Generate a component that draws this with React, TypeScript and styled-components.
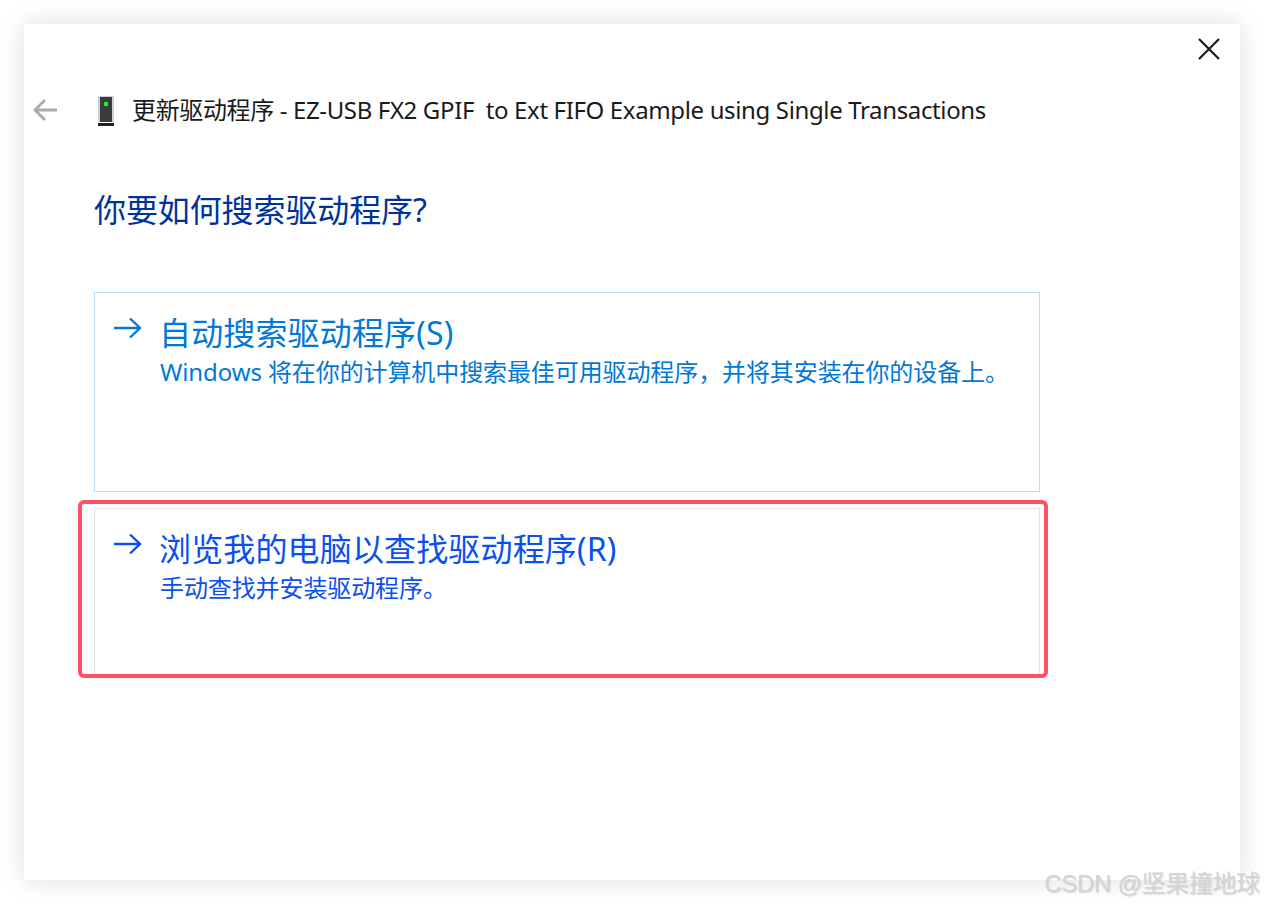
import styled, { createGlobalStyle } from "styled-components";

const GlobalStyle = createGlobalStyle`
    html, body {
        margin: 0;
        padding: 0;
        background: #fff;
    }
    body {
        font-family: "Noto Sans", "Noto Sans CJK SC", sans-serif;
    }
`;

const Page = styled.div`
    position: relative;
    box-sizing: border-box;
    width: 1264px;
    height: 906px;
    padding: 24px;
    overflow: hidden;
    background: #fff;
`;

const Dialog = styled.div`
    position: relative;
    box-sizing: border-box;
    width: 1216px;
    height: 856px;
    background: #fff;
    box-shadow: 0 0 24px rgba(0, 0, 0, 0.13);
`;

const TitleBar = styled.div`
    display: flex;
    justify-content: flex-end;
    height: 50px;
    padding: 12px 16px 0 0;
    box-sizing: border-box;
`;

const CloseButton = styled.button`
    width: 30px;
    height: 26px;
    padding: 0;
    border: 0;
    background: none;
    display: flex;
    align-items: center;
    justify-content: center;
`;

const NavRow = styled.div`
    display: flex;
    align-items: center;
    height: 40px;
    margin-top: 16px;
    padding-left: 8px;
`;

const BackButton = styled.div`
    display: flex;
    width: 26px;
    margin-right: 40px;
`;

const DeviceIcon = styled.div`
    display: flex;
    margin: 2px 18px 0 0;
`;

const NavTitle = styled.span`
    margin-bottom: 4px;
    font-size: 24px;
    letter-spacing: -0.36px;
    color: #1a1a1a;
    white-space: pre;
`;

const Content = styled.div`
    padding: 0 200px 0 70px;
`;

const Heading = styled.h1`
    margin: 56px 0 0;
    height: 48px;
    font-size: 32px;
    line-height: 48px;
    font-weight: 400;
    color: #003399;
    letter-spacing: -0.1px;
`;

const Options = styled.div`
    display: flex;
    flex-direction: column;
    gap: 16px;
    margin-top: 58px;
`;

const Option = styled.div<{ $tall?: boolean; $active?: boolean }>`
    box-sizing: border-box;
    height: ${({ $tall }) => ($tall ? "200px" : "168px")};
    padding: 20px 18px 0 18px;
    display: flex;
    gap: 16px;
    background: #fff;
    border: 1px solid ${({ $active }) => ($active ? "#e2e2e2" : "#bfdcf2")};
    color: ${({ $active }) => ($active ? "#0a50f0" : "#0078d7")};
`;

const ArrowIcon = styled.div`
    display: flex;
    height: 24px;
    margin-top: 3px;
`;

const OptionText = styled.div`
    display: flex;
    flex-direction: column;
`;

const OptionTitle = styled.div`
    font-size: 32px;
    line-height: 40px;
    letter-spacing: 0.15px;
`;

const OptionNote = styled.div`
    padding-left: 1px;
    font-size: 24px;
    line-height: 38px;
    letter-spacing: -0.1px;
`;

const Highlight = styled.div`
    position: absolute;
    left: 78px;
    top: 500px;
    width: 970px;
    height: 178px;
    box-sizing: border-box;
    border: 4px solid #ff5064;
    border-radius: 6px;
    pointer-events: none;
`;

const Watermark = styled.div`
    position: absolute;
    right: 4px;
    top: 869px;
    font-family: "Liberation Sans", "Noto Sans CJK SC", sans-serif;
    font-size: 24px;
    line-height: 30px;
    letter-spacing: -0.3px;
    color: #d4d4d4;
    text-shadow: 1px 1px 1px rgba(120, 120, 120, 0.25);
`;

const Arrow = () => (
    <svg width="30" height="24" viewBox="0 0 30 24" fill="none" stroke="currentColor" strokeWidth="2.4">
        <path d="M1 12H27M17 2.5L27 12L17 21.5" />
    </svg>
);

const App = () => (
    <Page>
        <GlobalStyle />
        <Dialog>
            <TitleBar>
                <CloseButton>
                    <svg width="24" height="24" viewBox="0 0 24 24" stroke="#1a1a1a" strokeWidth="2.2">
                        <path d="M2 2L22 22M22 2L2 22" />
                    </svg>
                </CloseButton>
            </TitleBar>
            <NavRow>
                <BackButton>
                    <svg width="26" height="24" viewBox="0 0 26 24" fill="none" stroke="#aaaaaa" strokeWidth="2.8">
                        <path d="M25 12H3M13 2L3 12L13 22" />
                    </svg>
                </BackButton>
                <DeviceIcon>
                    <svg width="16" height="30" viewBox="0 0 16 30">
                        <rect x="0" y="0" width="16" height="26" fill="#c8d0d8" />
                        <rect x="2" y="1" width="12" height="25" fill="#3c3c3c" />
                        <rect x="6" y="6" width="4" height="4" fill="#22ee22" />
                        <rect x="0" y="27" width="16" height="3" fill="#222222" />
                    </svg>
                </DeviceIcon>
                <NavTitle>更新驱动程序 - EZ-USB FX2 GPIF  to Ext FIFO Example using Single Transactions</NavTitle>
            </NavRow>
            <Content>
                <Heading>你要如何搜索驱动程序?</Heading>
                <Options>
                    <Option $tall>
                        <ArrowIcon><Arrow /></ArrowIcon>
                        <OptionText>
                            <OptionTitle>自动搜索驱动程序(S)</OptionTitle>
                            <OptionNote>Windows 将在你的计算机中搜索最佳可用驱动程序，并将其安装在你的设备上。</OptionNote>
                        </OptionText>
                    </Option>
                    <Option $active>
                        <ArrowIcon><Arrow /></ArrowIcon>
                        <OptionText>
                            <OptionTitle>浏览我的电脑以查找驱动程序(R)</OptionTitle>
                            <OptionNote>手动查找并安装驱动程序。</OptionNote>
                        </OptionText>
                    </Option>
                </Options>
            </Content>
        </Dialog>
        <Highlight />
        <Watermark>CSDN @坚果撞地球</Watermark>
    </Page>
);

export default App;
